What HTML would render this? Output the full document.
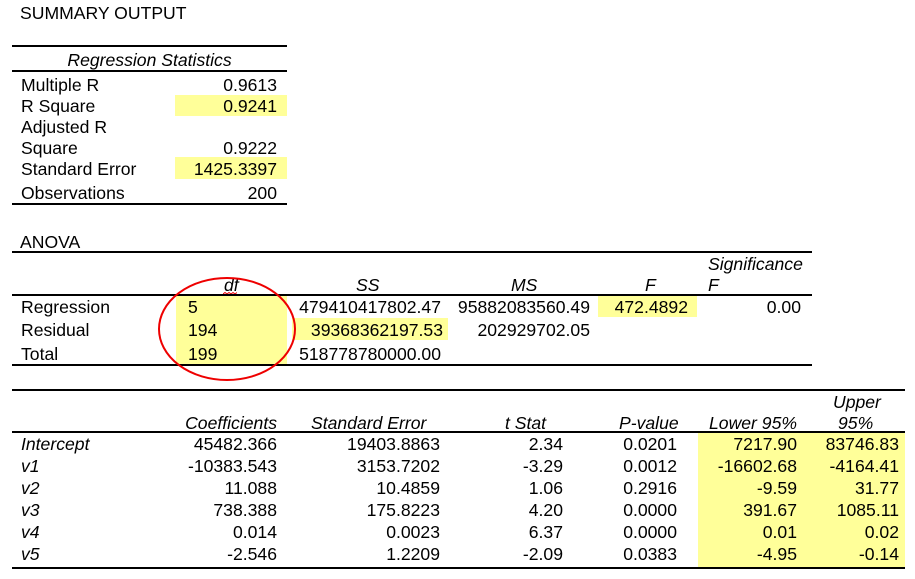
<!DOCTYPE html>
<html><head><meta charset="utf-8"><style>
body{margin:0;width:915px;height:579px;background:#fff;position:relative;overflow:hidden;font-family:"Liberation Sans",Arial,sans-serif;font-size:17.6px;color:#000}
.t{position:absolute;line-height:20px;white-space:nowrap;margin-top:0px}
.r{text-align:right}
.i{font-style:italic}
.l{position:absolute;height:1.5px;background:#000}
.y{position:absolute;background:#ffff99}
</style></head><body>
<div class="y" style="left:175px;top:95px;width:112px;height:21px"></div>
<div class="y" style="left:175px;top:157px;width:112px;height:22px"></div>
<div class="y" style="left:176px;top:295px;width:111px;height:69px"></div>
<div class="y" style="left:292px;top:318px;width:156px;height:22px"></div>
<div class="y" style="left:598px;top:295px;width:99px;height:22px"></div>
<div class="y" style="left:698px;top:432px;width:207px;height:135px"></div>

<div class="t" style="left:20px;top:3px">SUMMARY OUTPUT</div>
<div class="l" style="left:12px;top:45px;width:275px"></div>
<div class="t i" style="left:12px;width:275px;text-align:center;top:50px">Regression Statistics</div>
<div class="l" style="left:12px;top:70px;width:275px"></div>
<div class="t" style="left:21px;top:75px">Multiple R</div><div class="t r" style="right:638px;top:75px">0.9613</div>
<div class="t" style="left:21px;top:96px">R Square</div><div class="t r" style="right:638px;top:96px">0.9241</div>
<div class="t" style="left:21px;top:117px">Adjusted R</div>
<div class="t" style="left:21px;top:138px">Square</div><div class="t r" style="right:638px;top:138px">0.9222</div>
<div class="t" style="left:21px;top:159px">Standard Error</div><div class="t r" style="right:638px;top:159px">1425.3397</div>
<div class="t" style="left:21px;top:183px">Observations</div><div class="t r" style="right:638px;top:183px">200</div>
<div class="l" style="left:12px;top:203px;width:275px"></div>

<div class="t" style="left:20px;top:232px">ANOVA</div>
<div class="l" style="left:12px;top:251px;width:800px"></div>
<div class="t i" style="left:708px;top:254px">Significance</div>
<div class="t i" style="left:224px;top:275px">df</div>
<svg style="position:absolute;left:223px;top:292px" width="14" height="4"><path d="M0 2 L2 0.5 L4 2 L6 0.5 L8 2 L10 0.5 L12 2 L14 0.5" fill="none" stroke="#e00" stroke-width="1"/></svg>
<div class="t i" style="left:356px;top:275px">SS</div>
<div class="t i" style="left:511px;top:275px">MS</div>
<div class="t i" style="left:645px;top:275px">F</div>
<div class="t i" style="left:708px;top:275px">F</div>
<div class="l" style="left:12px;top:294px;width:800px"></div>
<div class="t" style="left:21px;top:297px">Regression</div><div class="t" style="left:188px;top:297px">5</div>
<div class="t r" style="right:474px;top:297px">479410417802.47</div><div class="t r" style="right:325px;top:297px">95882083560.49</div>
<div class="t r" style="right:227px;top:297px">472.4892</div><div class="t r" style="right:114px;top:297px">0.00</div>
<div class="t" style="left:21px;top:320px">Residual</div><div class="t" style="left:188px;top:320px">194</div>
<div class="t r" style="right:472px;top:320px">39368362197.53</div><div class="t r" style="right:325px;top:320px">202929702.05</div>
<div class="t" style="left:21px;top:344px">Total</div><div class="t" style="left:188px;top:344px">199</div>
<div class="t r" style="right:474px;top:344px">518778780000.00</div>
<div class="l" style="left:12px;top:364px;width:800px"></div>

<div class="l" style="left:12px;top:389px;width:893px"></div>
<div class="t i" style="left:833px;top:392px">Upper</div>
<div class="t i r" style="right:638px;top:413px">Coefficients</div>
<div class="t i" style="left:311px;top:413px">Standard Error</div>
<div class="t i" style="left:505px;top:413px">t Stat</div>
<div class="t i" style="left:619px;top:413px">P-value</div>
<div class="t i" style="left:709px;top:413px">Lower 95%</div>
<div class="t i" style="left:838px;top:413px">95%</div>
<div class="l" style="left:12px;top:431px;width:893px"></div>

<div class="t i" style="left:21px;top:434px">Intercept</div><div class="t r" style="right:638px;top:434px">45482.366</div><div class="t r" style="right:475px;top:434px">19403.8863</div><div class="t r" style="right:352px;top:434px">2.34</div><div class="t r" style="right:238px;top:434px">0.0201</div><div class="t r" style="right:118px;top:434px">7217.90</div><div class="t r" style="right:16px;top:434px">83746.83</div>
<div class="t i" style="left:21px;top:456px">v1</div><div class="t r" style="right:638px;top:456px">-10383.543</div><div class="t r" style="right:475px;top:456px">3153.7202</div><div class="t r" style="right:352px;top:456px">-3.29</div><div class="t r" style="right:238px;top:456px">0.0012</div><div class="t r" style="right:118px;top:456px">-16602.68</div><div class="t r" style="right:16px;top:456px">-4164.41</div>
<div class="t i" style="left:21px;top:478px">v2</div><div class="t r" style="right:638px;top:478px">11.088</div><div class="t r" style="right:475px;top:478px">10.4859</div><div class="t r" style="right:352px;top:478px">1.06</div><div class="t r" style="right:238px;top:478px">0.2916</div><div class="t r" style="right:118px;top:478px">-9.59</div><div class="t r" style="right:16px;top:478px">31.77</div>
<div class="t i" style="left:21px;top:500px">v3</div><div class="t r" style="right:638px;top:500px">738.388</div><div class="t r" style="right:475px;top:500px">175.8223</div><div class="t r" style="right:352px;top:500px">4.20</div><div class="t r" style="right:238px;top:500px">0.0000</div><div class="t r" style="right:118px;top:500px">391.67</div><div class="t r" style="right:16px;top:500px">1085.11</div>
<div class="t i" style="left:21px;top:522px">v4</div><div class="t r" style="right:638px;top:522px">0.014</div><div class="t r" style="right:475px;top:522px">0.0023</div><div class="t r" style="right:352px;top:522px">6.37</div><div class="t r" style="right:238px;top:522px">0.0000</div><div class="t r" style="right:118px;top:522px">0.01</div><div class="t r" style="right:16px;top:522px">0.02</div>
<div class="t i" style="left:21px;top:544px">v5</div><div class="t r" style="right:638px;top:544px">-2.546</div><div class="t r" style="right:475px;top:544px">1.2209</div><div class="t r" style="right:352px;top:544px">-2.09</div><div class="t r" style="right:238px;top:544px">0.0383</div><div class="t r" style="right:118px;top:544px">-4.95</div><div class="t r" style="right:16px;top:544px">-0.14</div>
<div class="l" style="left:12px;top:567px;width:893px"></div>

<svg style="position:absolute;left:0;top:0" width="915" height="579"><ellipse cx="227" cy="329" rx="68" ry="51" fill="none" stroke="#e00" stroke-width="2"/></svg>
</body></html>
